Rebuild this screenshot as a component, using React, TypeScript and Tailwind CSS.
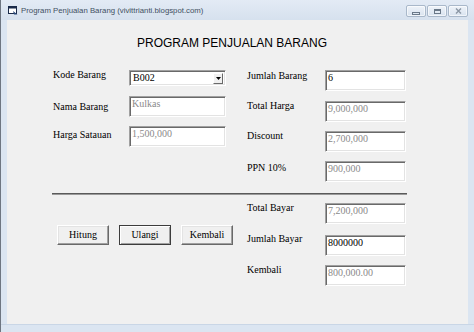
import React from "react";

const serif = { fontFamily: '"Liberation Serif", "Times New Roman", serif' };

function TextBox({ value, gray, className = "" }: { value: string; gray?: boolean; className?: string }) {
  return (
    <div
      className={`h-[21px] w-[81px] bg-white border border-t-[#a0a0a0] border-l-[#a0a0a0] border-b-white border-r-white shadow-[inset_1px_1px_0_#696969,inset_-1px_-1px_0_#e3e3e3] pl-[2px] pt-[1px] text-[10px] leading-[12px] whitespace-nowrap ${
        gray ? "text-[#8a8a8a]" : "text-black"
      } ${className}`}
      style={serif}
    >
      {value}
    </div>
  );
}

function Label({ text, className = "" }: { text: string; className?: string }) {
  return (
    <div className={`text-[10px] leading-[12px] text-black whitespace-nowrap ${className}`} style={serif}>
      {text}
    </div>
  );
}

function Btn({ text, focused }: { text: string; focused?: boolean }) {
  return (
    <div
      className={`w-[52px] h-[20px] flex items-center justify-center bg-[#f0f0f0] text-[10px] leading-[12px] text-black border ${
        focused
          ? "border-[#3c3c3c] shadow-[inset_1px_1px_0_#ffffff,inset_-1px_-1px_0_#a0a0a0]"
          : "border-t-white border-l-white border-b-[#696969] border-r-[#696969] shadow-[inset_-1px_-1px_0_#a0a0a0,inset_1px_1px_0_#e3e3e3]"
      }`}
      style={serif}
    >
      {text}
    </div>
  );
}

function CaptionBtn({ children }: { children: React.ReactNode }) {
  return (
    <div className="w-[20px] h-[12px] rounded-[2px] border border-[#a9b8ca] bg-gradient-to-b from-[#eef3f9] to-[#d9e3ef] flex items-center justify-center shadow-[inset_0_0_0_1px_rgba(255,255,255,0.6)]">
      {children}
    </div>
  );
}

export default function App() {
  return (
    <div className="w-[474px] h-[332px] bg-[#dbe5f1] flex flex-col border-l border-[#6e7681] overflow-hidden">
      {/* Title bar */}
      <div className="h-[20px] shrink-0 flex items-center bg-gradient-to-b from-[#e3ebf5] to-[#d6e1ee] relative">
        <svg width="10" height="9" viewBox="0 0 10 9" className="ml-[7px] mt-[1px]">
          <rect x="0.5" y="0.5" width="8" height="7" fill="#ffffff" stroke="#1b2b4a" />
          <rect x="0.5" y="0.5" width="8" height="2" fill="#1b2b4a" />
          <path d="M5 5 L9.5 8.5 L6 8.5 Z" fill="#2a4a7a" />
        </svg>
        <span
          className="ml-[3px] mt-[1px] text-[7.8px] leading-[10px] text-[#42505f] whitespace-nowrap"
          style={{ fontFamily: '"Liberation Sans", Arial, sans-serif' }}
        >
          Program Penjualan Barang (vivittrianti.blogspot.com)
        </span>
        <div className="ml-auto mr-[6px] mt-[2px] flex gap-[1px]">
          <CaptionBtn>
            <div className="w-[8px] h-[3px] border border-[#6a7888] mt-[4px]" />
          </CaptionBtn>
          <CaptionBtn>
            <div className="w-[7px] h-[5px] border border-[#6a7888] border-t-2" />
          </CaptionBtn>
          <CaptionBtn>
            <svg width="7" height="6" viewBox="0 0 7 6">
              <path d="M1 0.5 L6 5.5 M6 0.5 L1 5.5" stroke="#8a96a4" strokeWidth="1.4" />
            </svg>
          </CaptionBtn>
        </div>
      </div>

      {/* Client area */}
      <div className="ml-[6px] w-[461px] h-[304px] bg-[#f0f0f0] flex flex-col">
        <h1
          className="pl-[130px] mt-[16px] text-[12px] leading-[14px] text-black font-normal whitespace-nowrap"
          style={{ fontFamily: '"Liberation Sans", Arial, sans-serif' }}
        >
          PROGRAM PENJUALAN BARANG
        </h1>

        <div className="flex mt-[20px] pl-[46px]">
          {/* Left column */}
          <div className="flex flex-col w-[173px]">
            <div className="flex items-start">
              <Label text="Kode Barang" className="w-[76px] mt-[-1px]" />
              <div className="w-[97px] h-[16px] bg-white border border-t-[#a0a0a0] border-l-[#a0a0a0] border-b-white border-r-white shadow-[inset_1px_1px_0_#696969,inset_-1px_-1px_0_#e3e3e3] flex items-center pl-[3px] pr-[2px]">
                <span className="text-[10px] leading-[12px] text-black flex-1" style={serif}>
                  B002
                </span>
                <div className="w-[10px] h-[11px] bg-[#f0f0f0] border border-t-white border-l-white border-b-[#696969] border-r-[#696969] flex items-center justify-center">
                  <svg width="5" height="3" viewBox="0 0 5 3">
                    <path d="M0 0 H5 L2.5 3 Z" fill="#000" />
                  </svg>
                </div>
              </div>
            </div>
            <div className="flex items-start mt-[10px]">
              <Label text="Nama Barang" className="w-[76px] mt-[5px]" />
              <TextBox value="Kulkas" gray className="w-[97px]" />
            </div>
            <div className="flex items-start mt-[9px]">
              <Label text="Harga Satauan" className="w-[76px] mt-[3px]" />
              <TextBox value="1,500,000" gray className="w-[97px]" />
            </div>
          </div>

          {/* Right column */}
          <div className="flex flex-col ml-[21px]">
            <div className="flex items-start">
              <Label text="Jumlah Barang" className="w-[78px]" />
              <TextBox value="6" />
            </div>
            <div className="flex items-start mt-[10px]">
              <Label text="Total Harga" className="w-[78px] mt-[-1px]" />
              <TextBox value="9,000,000" gray />
            </div>
            <div className="flex items-start mt-[9px]">
              <Label text="Discount" className="w-[78px] mt-[-1px]" />
              <TextBox value="2,700,000" gray />
            </div>
            <div className="flex items-start mt-[9px]">
              <Label text="PPN 10%" className="w-[78px] mt-[1px]" />
              <TextBox value="900,000" gray />
            </div>
          </div>
        </div>

        {/* Separator */}
        <div className="ml-[45px] w-[355px] mt-[11px] h-[2px] border-t border-[#5a5a5a] border-b-0 bg-[#9a9a9a]" />

        <div className="flex pl-[50px]">
          <div className="flex gap-[10px] mt-[30px] h-[20px]">
            <Btn text="Hitung" />
            <Btn text="Ulangi" focused />
            <Btn text="Kembali" />
          </div>
          <div className="flex flex-col ml-[14px] mt-[8px]">
            <div className="flex items-start">
              <Label text="Total Bayar" className="w-[78px] mt-[-1px]" />
              <TextBox value="7,200,000" gray />
            </div>
            <div className="flex items-start mt-[11px]">
              <Label text="Jumlah Bayar" className="w-[78px] mt-[-2px]" />
              <TextBox value="8000000" />
            </div>
            <div className="flex items-start mt-[9px]">
              <Label text="Kembali" className="w-[78px] mt-[-1px]" />
              <TextBox value="800,000.00" gray />
            </div>
          </div>
        </div>
      </div>
      <div className="flex-1 border-t border-[#c9d6e6]" />
    </div>
  );
}
